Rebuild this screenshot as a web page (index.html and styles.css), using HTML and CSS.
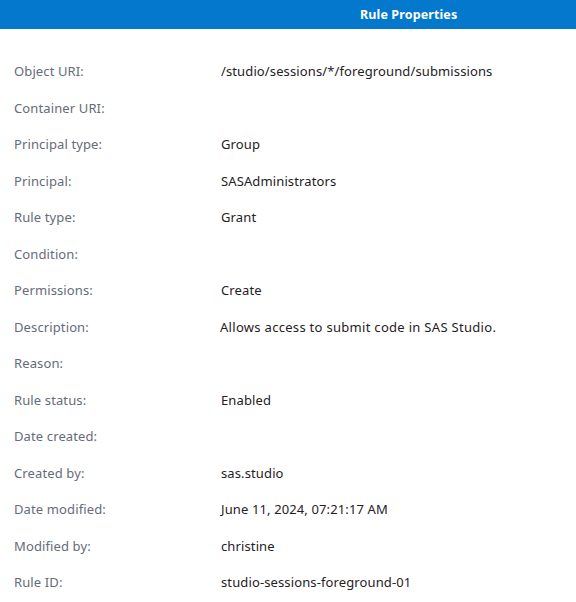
FILE: index.html
```html
<!DOCTYPE html>
<html>
<head>
<meta charset="utf-8">
<link rel="stylesheet" href="styles.css">
</head>
<body>
<div class="header"><span class="title">Rule Properties</span></div>
<div class="props">
  <div class="row"><span class="label">Object URI:</span><span class="value">/studio/sessions/*/foreground/submissions</span></div>
  <div class="row"><span class="label">Container URI:</span><span class="value"></span></div>
  <div class="row"><span class="label">Principal type:</span><span class="value">Group</span></div>
  <div class="row"><span class="label">Principal:</span><span class="value">SASAdministrators</span></div>
  <div class="row"><span class="label">Rule type:</span><span class="value">Grant</span></div>
  <div class="row"><span class="label">Condition:</span><span class="value"></span></div>
  <div class="row"><span class="label">Permissions:</span><span class="value">Create</span></div>
  <div class="row"><span class="label">Description:</span><span class="value desc">Allows access to submit code in SAS Studio.</span></div>
  <div class="row"><span class="label">Reason:</span><span class="value"></span></div>
  <div class="row"><span class="label">Rule status:</span><span class="value">Enabled</span></div>
  <div class="row"><span class="label">Date created:</span><span class="value"></span></div>
  <div class="row"><span class="label">Created by:</span><span class="value">sas.studio</span></div>
  <div class="row"><span class="label">Date modified:</span><span class="value">June 11, 2024, 07:21:17 AM</span></div>
  <div class="row"><span class="label">Modified by:</span><span class="value">christine</span></div>
  <div class="row"><span class="label">Rule ID:</span><span class="value">studio-sessions-foreground-01</span></div>
</div>
</body>
</html>
```
FILE: styles.css
```css
html, body {
  margin: 0;
  padding: 0;
  background: #ffffff;
}
body {
  font-family: "Noto Sans", sans-serif;
  font-size: 13px;
  letter-spacing: 0.12px;
  width: 576px;
  height: 602px;
  overflow: hidden;
}
.header {
  height: 29px;
  background: #0378cd;
  display: flex;
  align-items: center;
  padding-left: 360px;
}
.title {
  color: #ffffff;
  font-weight: 700;
  font-size: 12.5px;
}
.props {
  padding-top: 24px;
  display: flex;
  flex-direction: column;
}
.row {
  display: flex;
  align-items: center;
  height: 36.5px;
}
.label {
  width: 207px;
  padding-left: 14px;
  color: #666b79;
  flex-shrink: 0;
}
.value {
  color: #1f2126;
}
.desc {
  margin-left: -1px;
  letter-spacing: 0.3px;
}
```
